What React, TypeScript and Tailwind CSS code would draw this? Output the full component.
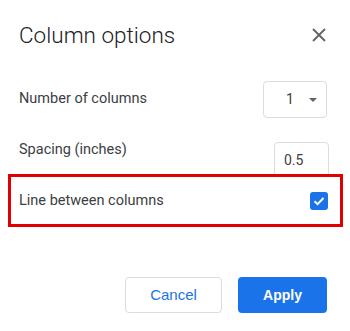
import React, { useState } from 'react';

const App: React.FC = () => {
  const [columns] = useState('1');
  const [spacing, setSpacing] = useState('0.5');
  const [lineBetween, setLineBetween] = useState(true);

  return (
    <div className="w-[350px] h-[331px] bg-white flex flex-col font-['Roboto',sans-serif] text-[#3c4043]">
      {/* header */}
      <div className="mt-[21px] h-[28px] flex items-center justify-between pl-[19px] pr-[24px]">
        <h1 className="text-[22.5px] leading-[28px] font-light text-[#202124]">Column options</h1>
        <button className="w-[14px] h-[14px] flex items-center justify-center">
          <svg width="14" height="14" viewBox="0 0 14 14">
            <path d="M1 1 L13 13 M13 1 L1 13" stroke="#5f6368" strokeWidth="1.8" fill="none" />
          </svg>
        </button>
      </div>

      {/* number of columns */}
      <div className="mt-[32px] h-[37px] flex items-center justify-between pl-[19px] pr-[23px]">
        <span className="text-[14.5px] leading-[16px] -mt-[2px]">Number of columns</span>
        <div className="w-[64px] h-[37px] border border-[#dadce0] rounded-[4px] flex items-center pl-[22px] pr-[9px] justify-between">
          <span className="text-[14px] text-[#3c4043]">{columns}</span>
          <span className="w-0 h-0 border-l-[4px] border-r-[4px] border-t-[4px] border-l-transparent border-r-transparent border-t-[#5f6368]" />
        </div>
      </div>

      {/* spacing */}
      <div className="mt-[24px] h-[32px] flex items-start justify-between pl-[19px] pr-[21px]">
        <span className="text-[14.5px] leading-[16px]">Spacing (inches)</span>
        <input
          value={spacing}
          onChange={e => setSpacing(e.target.value)}
          className="w-[55px] h-[34px] border border-[#dadce0] rounded-t-[4px] pl-[9px] pt-[2px] text-[14px] text-[#3c4043] outline-none"
        />
      </div>

      {/* line between columns (highlighted) */}
      <div className="relative z-10 bg-white ml-[8px] mr-[7px] h-[53px] border-[3px] border-[#e00000] flex items-center justify-between pl-[8px] pr-[12px]">
        <span className="text-[14.5px] leading-[16px] mt-[1px]">Line between columns</span>
        <button
          onClick={() => setLineBetween(v => !v)}
          className={`w-[18px] h-[18px] rounded-[3px] flex items-center justify-center ${lineBetween ? 'bg-[#1a73e8]' : 'border-2 border-[#5f6368]'}`}
        >
          {lineBetween && (
            <svg width="14" height="14" viewBox="0 0 14 14">
              <path d="M2.5 7.2 L5.6 10.2 L11.5 4" stroke="white" strokeWidth="2" fill="none" />
            </svg>
          )}
        </button>
      </div>

      {/* actions */}
      <div className="mt-[50px] flex justify-end gap-[16px] pr-[23px]">
        <button className="w-[97px] h-[36px] border border-[#dadce0] rounded-[4px] text-[15px] text-[#1a73e8] font-['Liberation_Sans',sans-serif]">
          Cancel
        </button>
        <button className="w-[89px] h-[36px] rounded-[4px] bg-[#1a73e8] text-[14px] text-white font-bold font-['Liberation_Sans',sans-serif]">
          Apply
        </button>
      </div>
    </div>
  );
};

export default App;
